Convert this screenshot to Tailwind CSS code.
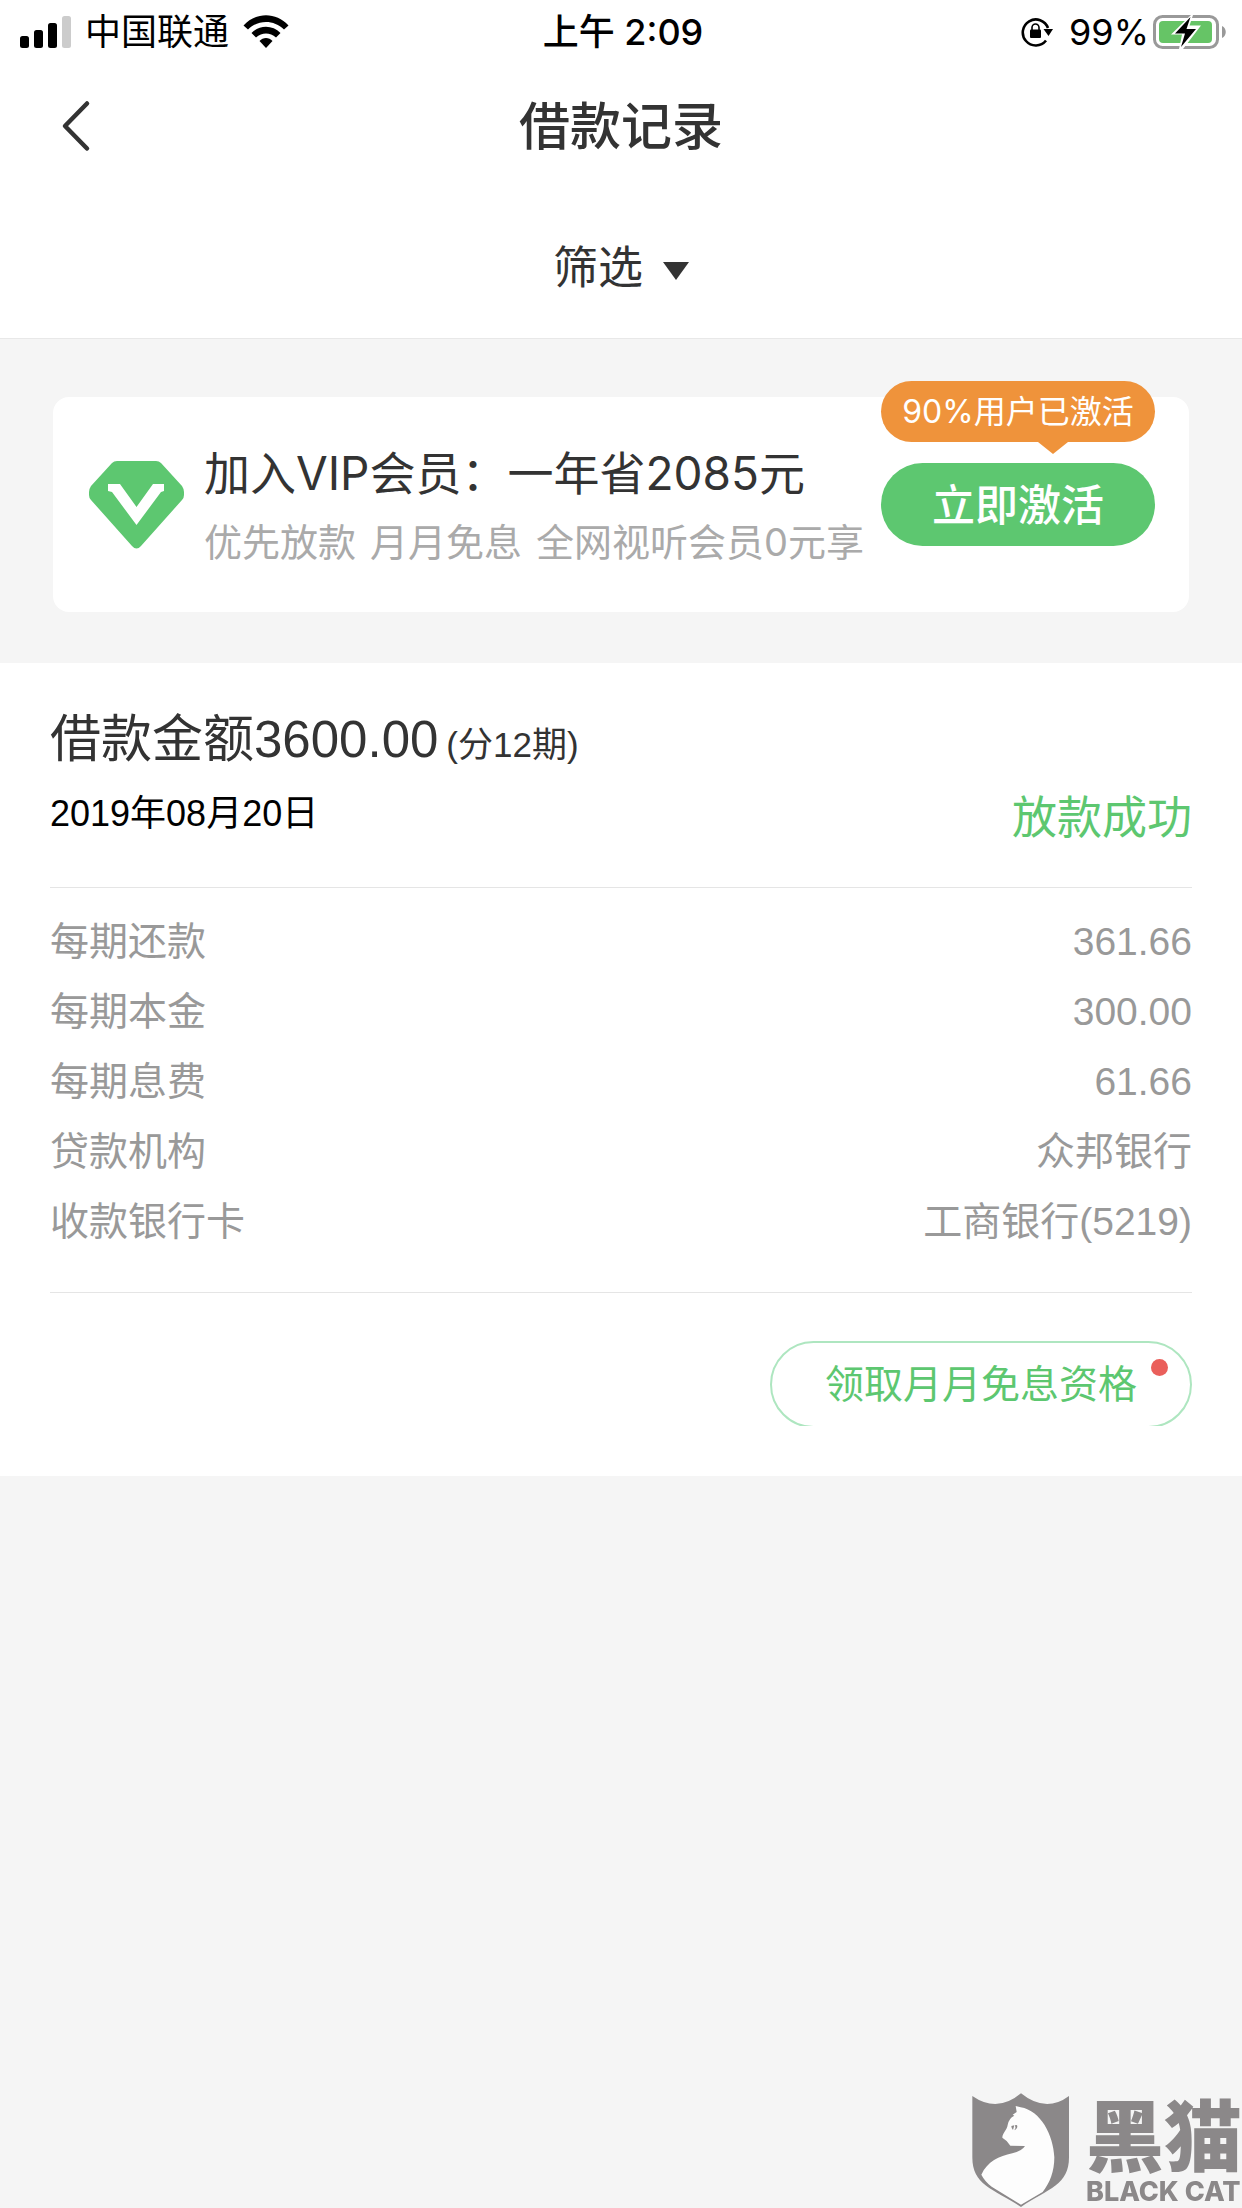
<!DOCTYPE html>
<html lang="zh-CN">
<head>
<meta charset="UTF-8">
<meta name="viewport" content="width=device-width, initial-scale=1.0">
<title>借款记录</title>
<script src="https://cdn.jsdelivr.net/npm/@tailwindcss/browser@4"></script>
</head>
<body class="min-h-screen bg-[#f5f5f5] font-['Liberation_Sans','Noto_Sans_CJK_SC',sans-serif] text-[#333]">

<!-- Header -->
<header class="bg-white border-b border-[#e8e8e8]">
  <div class="grid grid-cols-[1fr_auto_1fr] items-center h-16 pl-5 pr-4 text-[36px] leading-[64px] text-black font-['Inter','Noto_Sans_CJK_SC',sans-serif]">
    <div class="flex items-center gap-[14px]">
      <svg class="w-[51px] h-8" viewBox="0 0 51 32" aria-hidden="true">
        <rect x="0" y="20" width="9" height="12" rx="2.5"/>
        <rect x="14" y="14" width="9" height="18" rx="2.5"/>
        <rect x="28" y="7" width="9" height="25" rx="2.5"/>
        <rect x="42" y="0" width="9" height="32" rx="2.5" fill="#ccc"/>
      </svg>
      <span>中国联通</span>
      <svg class="w-[46px] h-[34px]" viewBox="0 0 46 34" aria-hidden="true">
        <path d="M0.5 10.5C13-3.200 33-3.200 45.500 10.500L41 14.500C31 4.500 15 4.500 5 14.500Z"/>
        <path d="M8.500 18C16.500 9.500 29.500 9.500 37.500 18L33 22.500C27 17 19 17 13 22.500Z"/>
        <path d="M16.500 26C20 22 26 22 29.500 26L23 33Z"/>
      </svg>
    </div>
    <span class="font-medium">上午 2:09</span>
    <div class="flex items-center justify-end gap-1">
      <svg class="w-8 h-[30px] mr-3" viewBox="0 0 32 30" aria-hidden="true">
        <path d="M25 23.500A13 13 0 1 1 27 11" fill="none" stroke="#000" stroke-width="2.600"/>
        <path d="M22.500 12L32 12L27.500 19Z"/>
        <rect x="9" y="12.500" width="11" height="8.500" rx="1"/>
        <path d="M11 13V10.500A3.500 3.500 0 0 1 18 10.500V13" fill="none" stroke="#000" stroke-width="1.600"/>
      </svg>
      <span>99%</span>
      <svg class="w-[73px] h-[34px]" viewBox="0 0 73 34" aria-hidden="true">
        <rect x="1.500" y="1.500" width="63" height="31" rx="8" fill="#fff" stroke="#999" stroke-width="3"/>
        <rect x="6" y="6" width="53" height="22" rx="4" fill="#66c466"/>
        <path d="M69 11C74 13 74 21 69 23Z" fill="#999"/>
        <path d="M38 0L18 19.500H29L26 34H30L48 10.500H36.500L40 0Z" fill="#fff"/>
        <path d="M37.500 2L22 18.500H32L28 32L43 14H33.500Z"/>
      </svg>
    </div>
  </div>

  <div class="grid grid-cols-[1fr_auto_1fr] items-center h-[124px] px-[60px]">
    <button type="button" aria-label="返回" class="justify-self-start">
      <svg class="w-8 h-[52px]" viewBox="0 0 32 52" fill="none" stroke="#333" stroke-width="4.500" stroke-linecap="round" stroke-linejoin="round">
        <path d="M27 3.500L5 26L27 48.500"/>
      </svg>
    </button>
    <h1 class="pt-1 text-[51px] leading-[72px] font-medium">借款记录</h1>
  </div>

  <button type="button" class="flex items-center justify-center gap-5 w-full h-[150px] pt-3 text-[45px] leading-[64px]">
    <span>筛选</span>
    <svg class="w-[26px] h-[18px] mt-1" viewBox="0 0 26 18" fill="#333" aria-hidden="true"><path d="M0 0H26L13 18Z"/></svg>
  </button>
</header>

<!-- VIP banner -->
<section class="px-[53px] pt-[58px] pb-[51px]">
  <div class="flex items-center h-[215px] pl-9 pr-[34px] bg-white rounded-2xl font-['Inter','Noto_Sans_CJK_SC',sans-serif]">
    <svg class="shrink-0 w-[95px] h-[88px] mr-5" viewBox="0 0 95 88" aria-hidden="true">
      <path d="M28 0H67Q70 0 72 2L93 25Q95 28 95 31V34Q95 37 93 39L52 85Q47.500 90 43 85L2 39Q0 37 0 34V31Q0 28 2 25L23 2Q25 0 28 0Z" fill="#5dc770"/>
      <path d="M19 23H31L47.500 46L64 23H75V30L72 31L47.500 64L23 31L19 30Z" fill="#fff"/>
    </svg>
    <div class="grow pt-1 whitespace-nowrap">
      <h2 class="text-[46px] leading-[70px]">加入VIP会员：一年省2085元</h2>
      <p class="flex gap-[14px] text-[38px] leading-[68px] text-[#aaa]">
        <span>优先放款</span>
        <span>月月免息</span>
        <span>全网视听会员0元享</span>
      </p>
    </div>
    <div class="relative shrink-0">
      <div class="absolute bottom-full left-0 w-full mb-[21px] h-[61px] rounded-full bg-[#ef933b] text-center text-[32px] leading-[62px] text-white whitespace-nowrap">
        90%用户已激活
        <svg class="absolute top-full right-[87px] w-[30px] h-3" viewBox="0 0 30 12" fill="#ef933b" aria-hidden="true"><path d="M0 0H30L15 12Z"/></svg>
      </div>
      <button type="button" class="block w-[274px] h-[83px] rounded-full bg-[#5dc770] text-[43px] font-medium leading-[84px] text-white">立即激活</button>
    </div>
  </div>
</section>

<!-- Loan record -->
<main class="px-[50px] pt-9 pb-[50px] bg-white">
  <h2 class="flex items-baseline gap-2 h-[80px] text-[51px] leading-[82px]">
    <span>借款金额3600.00</span>
    <span class="text-[35px]">(分12期)</span>
  </h2>
  <div class="flex justify-between items-start pb-[28px] border-b border-[#e5e5e5]">
    <time datetime="2019-08-20" class="text-[36px] leading-[70px] text-black">2019年08月20日</time>
    <span class="text-[45px] leading-[80px] text-[#5dc770]">放款成功</span>
  </div>

  <dl class="pt-[19px] pb-[35px] border-b border-[#e5e5e5] text-[39px] leading-[70px] text-[#999]">
    <div class="flex justify-between"><dt>每期还款</dt><dd>361.66</dd></div>
    <div class="flex justify-between"><dt>每期本金</dt><dd>300.00</dd></div>
    <div class="flex justify-between"><dt>每期息费</dt><dd>61.66</dd></div>
    <div class="flex justify-between"><dt>贷款机构</dt><dd>众邦银行</dd></div>
    <div class="flex justify-between"><dt>收款银行卡</dt><dd>工商银行(5219)</dd></div>
  </dl>

  <div class="flex justify-end h-[85px] mt-12 overflow-hidden">
    <button type="button" class="relative h-[87px] px-[53px] border-2 border-[#aee6c0] rounded-full text-[39px] leading-[83px] text-[#5dc770]">
      领取月月免息资格
      <span class="absolute top-4 right-[22px] size-[17px] rounded-full bg-[#ea5f5b]"></span>
    </button>
  </div>
</main>

<!-- Watermark -->
<aside class="fixed bottom-0 right-0 flex items-end gap-4 text-[#8b8889]">
  <svg class="w-[98px] h-[115px]" viewBox="69 69 294 345" aria-hidden="true">
    <path d="M70 78Q145 130 216 70Q290 130 360 78V262C360 345 300 355 216 411C130 355 70 345 70 262Z" fill="currentColor"/>
    <path d="M191 134L203 126L200 108L215 112C275 122 313 195 316 262C316 305 302 340 281 366L216 404L128 350Q108 335 97 314C115 275 150 258 190 250Q218 244 228 228L184 227Q176 212 160 203C160 190 174 180 176 165Q179 145 196 137Z" fill="#fdfdfd"/>
    <path d="M187 168L196 166L192 180Q187 176 187 168ZM198 166Q204 164 205 168Q205 177 196 181Q202 174 198 166Z" fill="currentColor"/>
  </svg>
  <div class="flex flex-col font-['Inter','Noto_Sans_CJK_SC',sans-serif]">
    <span class="text-[78px] leading-[76px] font-black">黑猫</span>
    <span class="text-[27px] leading-[32px] font-extrabold">BLACK CAT</span>
  </div>
</aside>

</body>
</html>
